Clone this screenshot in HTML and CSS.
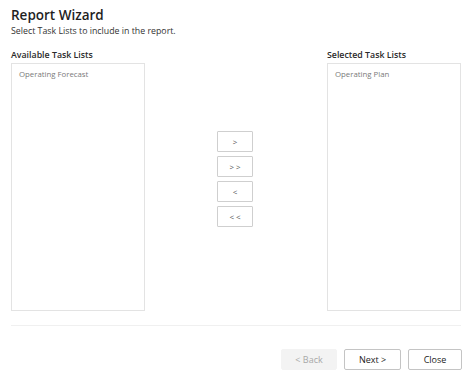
FILE: index.html
```html
<!DOCTYPE html>
<html lang="en">
<head>
    <meta charset="UTF-8">
    <title>Report Wizard</title>
    <link rel="stylesheet" href="styles.css">
</head>
<body>
    <div class="wizard">
        <h1>Report Wizard</h1>
        <p class="subtitle">Select Task Lists to include in the report.</p>

        <div class="picker">
            <label class="list-label">Available Task Lists</label>
            <div></div>
            <label class="list-label">Selected Task Lists</label>

            <div class="list-box">
                <div class="list-item">Operating Forecast</div>
            </div>
            <div class="move-buttons">
                <button class="move-btn">&gt;</button>
                <button class="move-btn">&gt; &gt;</button>
                <button class="move-btn">&lt;</button>
                <button class="move-btn">&lt; &lt;</button>
            </div>
            <div class="list-box">
                <div class="list-item">Operating Plan</div>
            </div>
        </div>

        <div class="separator"></div>

        <div class="footer">
            <button class="nav-btn back" disabled>&lt; Back</button>
            <button class="nav-btn next">Next &gt;</button>
            <button class="nav-btn close">Close</button>
        </div>
    </div>
</body>
</html>
```

FILE: styles.css
```css
* {
    margin: 0;
    padding: 0;
    box-sizing: border-box;
}

body {
    font-family: "Open Sans", "Noto Sans", sans-serif;
    background: #fff;
    color: #222;
}

.wizard {
    width: 474px;
    padding: 6px 13px 0 11px;
}

h1 {
    font-size: 13.5px;
    font-weight: 600;
    line-height: 18px;
    color: #1f1f1f;
}

.subtitle {
    font-size: 8.8px;
    line-height: 14px;
    color: #333;
}

.picker {
    display: grid;
    grid-template-columns: 134px 1fr 134px;
    margin-top: 10px;
}

.list-label {
    font-size: 8.8px;
    font-weight: 600;
    line-height: 14px;
    color: #2a2a2a;
    margin-bottom: 1px;
}

.list-box {
    height: 248px;
    border: 1px solid #e3e3e3;
    padding: 4px 7px;
}

.list-item {
    font-size: 7.8px;
    line-height: 12px;
    color: #7a7a7a;
}

.move-buttons {
    display: flex;
    flex-direction: column;
    align-items: center;
    gap: 4px;
    padding-top: 68px;
    padding-right: 2px;
}

.move-btn {
    width: 36px;
    height: 21px;
    background: #fff;
    border: 1px solid #cfcfcf;
    border-radius: 1px;
    font-family: inherit;
    font-size: 8px;
    color: #555;
}

.separator {
    height: 1px;
    background: #f0f0f0;
    margin-top: 14px;
}

.footer {
    display: flex;
    justify-content: flex-end;
    gap: 7px;
    margin-top: 23px;
    margin-right: -1px;
}

.nav-btn {
    height: 21px;
    background: #fff;
    border: 1px solid #c4c4c4;
    border-radius: 2px;
    font-family: inherit;
    font-size: 9px;
    color: #222;
}

.back {
    width: 56px;
    background: #f3f3f3;
    border-color: #f3f3f3;
    color: #a8a8a8;
}

.next {
    width: 57px;
}

.close {
    width: 54px;
}
```
